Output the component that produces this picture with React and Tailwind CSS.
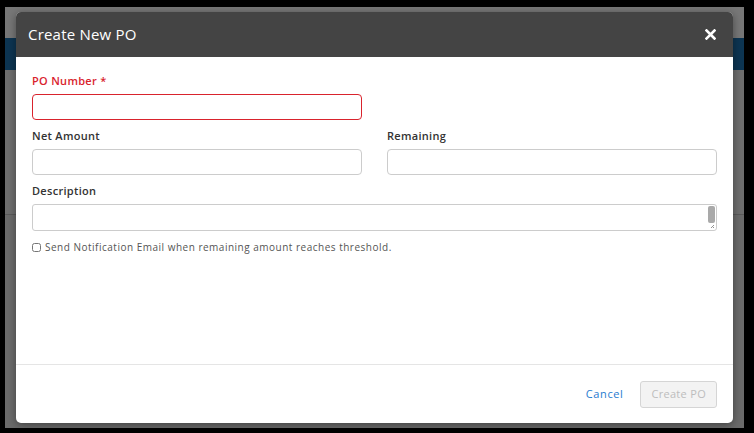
import React, { useState } from 'react';

const font = { fontFamily: '"Open Sans", "Liberation Sans", sans-serif' };

function Field({ label, required, error, className = '' }) {
  return (
    <div className={`flex flex-col ${className}`}>
      <label
        className={`text-[11px] font-semibold leading-[14px] tracking-[0.3px] mb-[6px] ${error ? 'text-[#d9232d]' : 'text-[#333]'}`}
      >
        {label}
        {required && ' *'}
      </label>
      <input
        type="text"
        className={`h-[26px] w-full rounded-[4px] border bg-white px-2 text-xs outline-none ${
          error ? 'border-[#d9232d]' : 'border-[#ccc]'
        }`}
      />
    </div>
  );
}

export default function App() {
  const [notify, setNotify] = useState(false);

  return (
    <div className="h-[433px] w-full bg-black pl-[5px] pr-[10px] pt-[7px] pb-[5px]" style={font}>
      {/* Dimmed page behind the modal */}
      <div className="relative flex h-full flex-col bg-[#6b6b6b]">
        <div className="h-[31px] bg-[#777]" />
        <div className="h-[32px] bg-[#0d3552]" />
        <div className="h-[145px] border-b border-[#5a5a5a] bg-[#6e6e6e]" />
        <div className="flex-1 bg-[#6b6b6b]" />

        {/* Modal */}
        <div className="absolute left-[11px] right-[11px] top-[5px] bottom-[5px] flex flex-col rounded-[5px] bg-white shadow-[0_2px_8px_rgba(0,0,0,0.4)]">
          <header className="flex h-[45px] items-center justify-between rounded-t-[5px] bg-[#444] pl-[12px] pr-[17px]">
            <h1 className="text-[15px] font-medium tracking-[0.2px] text-white">Create New PO</h1>
            <button className="text-white">
              <svg width="11" height="11" viewBox="0 0 11 11">
                <path d="M1.5 1.5 L9.5 9.5 M9.5 1.5 L1.5 9.5" stroke="white" strokeWidth="2.6" strokeLinecap="square" />
              </svg>
            </button>
          </header>

          <main className="flex-1 px-4 pt-[17px]">
            <div className="flex gap-[25px]">
              <Field label="PO Number" required error className="flex-1" />
              <div className="flex-1" />
            </div>
            <div className="mt-[9px] flex gap-[25px]">
              <Field label="Net Amount" className="flex-1" />
              <Field label="Remaining" className="flex-1" />
            </div>
            <div className="mt-[9px] flex flex-col">
              <label className="mb-[6px] text-[11px] font-semibold leading-[14px] tracking-[0.3px] text-[#333]">Description</label>
              <div className="relative h-[27px] rounded-[3px] border border-[#ccc]">
                <div className="absolute right-[1px] top-[1px] h-[17px] w-[7px] rounded-[2px] bg-[#a9a9a9]" />
                <svg className="absolute bottom-[1px] right-[1px]" width="5" height="5" viewBox="0 0 5 5">
                  <path d="M1 4 L4 1 M3 4 L4 3" stroke="#777" strokeWidth="0.8" />
                </svg>
              </div>
            </div>
            <label className="mt-[9px] flex items-center gap-[4px] text-[10px] tracking-[0.5px] text-[#555]">
              <input
                type="checkbox"
                checked={notify}
                onChange={e => setNotify(e.target.checked)}
                className="m-0 h-[9px] w-[9px]"
              />
              Send Notification Email when remaining amount reaches threshold.
            </label>
          </main>

          <footer className="flex h-[59px] items-center justify-end gap-[17px] border-t border-[#e5e5e5] px-4">
            <button className="text-[11px] tracking-[0.6px] text-[#1f7bd0]">Cancel</button>
            <button
              disabled
              className="h-[27px] rounded-[3px] border border-[#d5d5d5] bg-[#f3f3f3] px-[10px] text-[11px] tracking-[0.3px] text-[#bdbdbd]"
            >
              Create PO
            </button>
          </footer>
        </div>
      </div>
    </div>
  );
}
